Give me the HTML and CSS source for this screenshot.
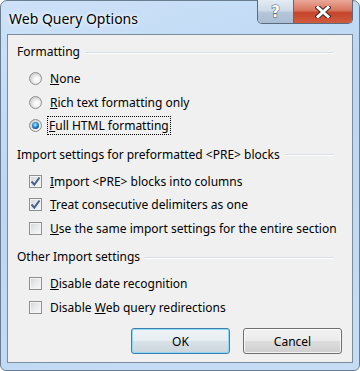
FILE: index.html
```html
<!DOCTYPE html>
<html lang="en">
<head>
    <meta charset="UTF-8">
    <title>Web Query Options</title>
    <link rel="stylesheet" href="styles.css">
</head>
<body>
    <div class="window">
        <div class="titlebar">
            <span class="title">Web Query Options</span>
            <div class="caption-buttons">
                <span class="cap-btn help">?</span>
                <span class="cap-btn close">
                    <svg width="16" height="12" viewBox="0 0 16 12">
                        <path d="M3 1.5 L13 10.5 M13 1.5 L3 10.5" stroke="#4a2a26" stroke-width="5" stroke-linecap="square"/>
                        <path d="M3 1.5 L13 10.5 M13 1.5 L3 10.5" stroke="#fff" stroke-width="3" stroke-linecap="square"/>
                    </svg>
                </span>
            </div>
        </div>
        <div class="client">
            <div class="group">
                <div class="group-title"><span>Formatting</span></div>
                <div class="option"><span class="radio"></span><span class="text"><u>N</u>one</span></div>
                <div class="option"><span class="radio"></span><span class="text"><u>R</u>ich text formatting only</span></div>
                <div class="option"><span class="radio checked"></span><span class="text focused"><u>F</u>ull HTML formatting</span></div>
            </div>
            <div class="group">
                <div class="group-title"><span>Import settings for preformatted &lt;PRE&gt; blocks</span></div>
                <div class="option"><span class="check"><svg width="11" height="11" viewBox="0 0 11 11"><path d="M1.5 5.5 L4.3 8.6 L9.5 1.5" fill="none" stroke="#4b5e8e" stroke-width="2"/></svg></span><span class="text"><u>I</u>mport &lt;PRE&gt; blocks into columns</span></div>
                <div class="option"><span class="check"><svg width="11" height="11" viewBox="0 0 11 11"><path d="M1.5 5.5 L4.3 8.6 L9.5 1.5" fill="none" stroke="#4b5e8e" stroke-width="2"/></svg></span><span class="text"><u>T</u>reat consecutive delimiters as one</span></div>
                <div class="option"><span class="check"></span><span class="text"><u>U</u>se the same import settings for the entire section</span></div>
            </div>
            <div class="group">
                <div class="group-title"><span>Other Import settings</span></div>
                <div class="option"><span class="check"></span><span class="text"><u>D</u>isable date recognition</span></div>
                <div class="option"><span class="check"></span><span class="text">Disable <u>W</u>eb query redirections</span></div>
            </div>
            <div class="buttons">
                <button class="btn default">OK</button>
                <button class="btn">Cancel</button>
            </div>
        </div>
    </div>
</body>
</html>
```

FILE: styles.css
```css
body {
    margin: 0;
    background: #fff;
    font-family: "Noto Sans", "Open Sans", sans-serif;
    font-size: 12px;
    color: #000;
}
.window {
    width: 360px;
    height: 371px;
    box-sizing: border-box;
    border: 1px solid #6b7d90;
    border-radius: 7px 7px 6px 6px;
    background: linear-gradient(160deg, #cde2f8 0%, #bcd7f3 40%, #c6ddf5 100%);
    padding: 0 6px 7px;
    display: flex;
    flex-direction: column;
}
.titlebar {
    height: 33px;
    display: flex;
    justify-content: space-between;
    align-items: flex-start;
    padding-left: 2px;
}
.title {
    font-size: 14px;
    line-height: 20px;
    margin-top: 8px;
    text-shadow: 0 0 6px #fff, 0 0 3px #fff;
}
.caption-buttons {
    display: flex;
    margin-top: -1px;
    border: 1px solid #5c6b7b;
    border-top: none;
    border-radius: 0 0 5px 5px;
    overflow: hidden;
}
.cap-btn {
    height: 23px;
    display: flex;
    align-items: center;
    justify-content: center;
}
.help {
    width: 35px;
    border-right: 1px solid #5c6b7b;
    background: linear-gradient(#e3ebf4 0%, #cfdbe9 45%, #b5c6da 55%, #a9bdd4 100%);
    font-family: "DejaVu Sans", sans-serif;
    font-weight: bold;
    font-size: 15px;
    color: #fff;
    -webkit-text-stroke: 1px #4c5866;
    paint-order: stroke fill;
}
.close {
    width: 58px;
    background: linear-gradient(#e9a898 0%, #d8765f 45%, #c5442c 55%, #cf5b3f 100%);
}
.client {
    flex: 1;
    background: #f0f0f0;
    border: 1px solid #7b8c9e;
    display: flex;
    flex-direction: column;
    padding: 9px 10px 8px 9px;
}
.group {
    flex-shrink: 0;
    margin-bottom: 9.25px;
}
.group:nth-last-child(2) {
    margin-bottom: 0;
}
.group-title {
    display: flex;
    align-items: center;
    gap: 5px;
    height: 16px;
    line-height: 16px;
    margin-right: 8px;
    margin-bottom: 6.75px;
}
.group-title::after {
    content: "";
    flex: 1;
    height: 1px;
    background: #d5dfe5;
    box-shadow: 0 1px #fff;
}
.option {
    display: flex;
    align-items: center;
    height: 23.5px;
    padding-left: 12px;
    gap: 8px;
}
.radio {
    width: 13px;
    height: 13px;
    box-sizing: border-box;
    border-radius: 50%;
    border: 1px solid #8f8f8f;
    background: radial-gradient(circle at 60% 60%, #fff 0, #f3f3f3 3px, #d4d4d4 6px);
    display: grid;
    place-items: center;
}
.radio.checked::after {
    content: "";
    width: 7px;
    height: 7px;
    border-radius: 50%;
    background: radial-gradient(circle at 45% 40%, #c4ecff 0, #3aa2e6 2px, #0d4d8c 4px);
}
.check {
    width: 13px;
    height: 13px;
    box-sizing: border-box;
    border: 1px solid #8e8f8f;
    background: linear-gradient(135deg, #d2d5da 0%, #e8eaec 50%, #f8f8f8 100%);
    box-shadow: inset 0 0 0 1px #f4f4f4;
    display: grid;
    place-items: center;
}
.check svg {
    display: block;
}
.text {
    line-height: 17px;
    white-space: nowrap;
}
.text.focused {
    outline: 1px dotted #000;
    padding: 0 1px;
    margin-left: -2px;
}
.buttons {
    flex-shrink: 0;
    margin-top: auto;
    display: flex;
    justify-content: flex-end;
    gap: 13px;
}
.btn {
    width: 99px;
    height: 26px;
    border: 1px solid #707070;
    border-radius: 3px;
    background: linear-gradient(#f2f2f2 0%, #ebebeb 48%, #dddddd 52%, #cfcfcf 100%);
    box-shadow: inset 0 0 0 1px rgba(255, 255, 255, 0.75);
    font-family: inherit;
    font-size: 12px;
    color: #000;
    padding: 0;
}
.btn.default {
    border-color: #3c7fb1;
    box-shadow: inset 0 0 0 1px #8fd8f6;
    background: linear-gradient(#eef4f8 0%, #e6edf1 48%, #d8e1e7 52%, #cbd5dc 100%);
}
```
